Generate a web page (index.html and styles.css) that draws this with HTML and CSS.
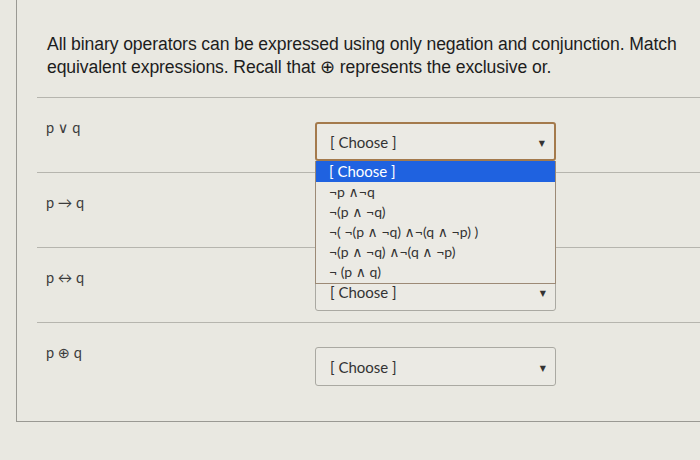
FILE: index.html
```html
<!DOCTYPE html>
<html lang="en">
  <head>
    <meta charset="UTF-8" />
    <meta name="viewport" content="width=device-width, initial-scale=1.0" />
    <title>Matching Question</title>
    <link rel="stylesheet" href="styles.css">
  </head>
  <body>
    <div class="question">
      <p class="prompt">
        All binary operators can be expressed using only negation and conjunction. Match
        equivalent expressions. Recall that ⊕ represents the exclusive or.
      </p>
      <div class="matches">
        <div class="matchRow">
          <div class="term">p ∨ q</div>
          <div class="pick">
            <div class="choice open">[ Choose ]<span class="caret">▼</span></div>
            <!-- the open option list of the first answer -->
            <ul class="options">
              <li class="selected">[ Choose ]</li>
              <li>¬p ∧¬q</li>
              <li>¬(p ∧ ¬q)</li>
              <li>¬( ¬(p ∧ ¬q) ∧¬(q ∧ ¬p) )</li>
              <li>¬(p ∧ ¬q) ∧¬(q ∧ ¬p)</li>
              <li>¬ (p ∧ q)</li>
            </ul>
          </div>
        </div>
        <div class="matchRow">
          <div class="term">p → q</div>
          <div class="pick">
            <div class="choice">[ Choose ]<span class="caret">▼</span></div>
          </div>
        </div>
        <div class="matchRow">
          <div class="term">p ↔ q</div>
          <div class="pick">
            <div class="choice">[ Choose ]<span class="caret">▼</span></div>
          </div>
        </div>
        <div class="matchRow last">
          <div class="term">p ⊕ q</div>
          <div class="pick">
            <div class="choice">[ Choose ]<span class="caret">▼</span></div>
          </div>
        </div>
      </div>
    </div>
  </body>
</html>
```

FILE: styles.css
```css
html {
  background: #e9e8e1;
}
body {
  margin: 0;
  overflow: hidden;
}
.question {
  margin-left: 16px;
  border-left: 1px solid #9a9993;
  border-bottom: 1px solid #9a9993;
  padding-left: 20px;
}
.prompt {
  margin: 0;
  padding: 33px 0 18px 10px;
  font-family: 'Liberation Sans', Arial, sans-serif;
  font-size: 17.6px;
  line-height: 23px;
  color: #1d1d1d;
  letter-spacing: -0.1px;
}
.matchRow {
  display: grid;
  grid-template-columns: 278px 241px;
  align-items: start;
  height: 74px;
  border-top: 1px solid #b6b5ae;
}
.matchRow.last {
  height: 98px;
}
.term {
  padding: 20px 0 0 9px;
  font-family: 'Lato', 'DejaVu Sans', sans-serif;
  font-size: 14.5px;
  line-height: 20px;
  color: #3c3c3c;
}
.pick {
  position: relative;
  margin-top: 24px;
}
.choice {
  display: flex;
  align-items: center;
  justify-content: space-between;
  height: 39px;
  box-sizing: border-box;
  padding: 0 9px 0 14px;
  border: 1px solid #aaa9a2;
  border-radius: 3px;
  background: #ebeae4;
  font-family: 'Lato', 'DejaVu Sans', sans-serif;
  font-size: 15px;
  color: #333;
}
.choice.open {
  border: 2px solid #a47a4c;
  padding-left: 13px;
}
.caret {
  font-family: 'DejaVu Sans', sans-serif;
  font-size: 8px;
  color: #333;
  padding-top: 4px;
}
.options {
  position: absolute;
  top: 100%;
  left: 0;
  right: 0;
  z-index: 2;
  margin: 0;
  padding: 0 0 1px 0;
  list-style: none;
  background: #ebeae4;
  border: 1px solid #9c8a76;
  border-top: none;
  font-family: 'Lato', 'DejaVu Sans', sans-serif;
  font-size: 14px;
  line-height: 20px;
  color: #333;
}
.options li {
  padding-left: 13px;
  white-space: nowrap;
}
.options li.selected {
  background: #1f62e0;
  color: #fff;
  line-height: 21px;
  font-size: 15px;
}
```
